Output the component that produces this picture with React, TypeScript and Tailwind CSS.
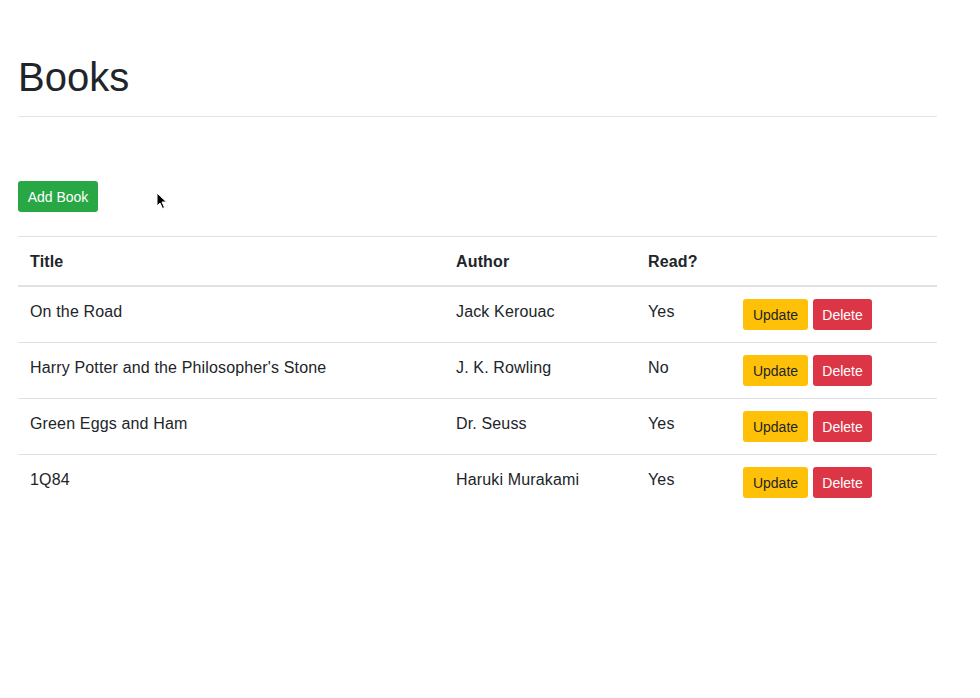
import React from 'react'

const books = [
  { title: 'On the Road', author: 'Jack Kerouac', read: true },
  { title: "Harry Potter and the Philosopher's Stone", author: 'J. K. Rowling', read: false },
  { title: 'Green Eggs and Ham', author: 'Dr. Seuss', read: true },
  { title: '1Q84', author: 'Haruki Murakami', read: true },
]

export default function App() {
  return (
    <div
      className="relative min-h-[698px] bg-white text-[#212529]"
      style={{ fontFamily: '"Liberation Sans", Arial, sans-serif' }}
    >
      <div className="w-[919px] ml-[18px] pt-[53px]">
        <h1 className="text-[40px] leading-[48px] font-normal">Books</h1>
        <hr className="mt-[15px] border-0 border-t border-[#e5e5e5]" />

        <button className="mt-[64px] h-[31px] w-[80px] rounded-[3px] bg-[#28a745] text-white text-[14px] leading-[21px] pt-[1px]">
          Add Book
        </button>

        {/* Table */}
        <table className="mt-[24px] w-full border-collapse text-[16px] tracking-[0.15px]">
          <thead>
            <tr className="border-t border-[#dee2e6]">
              <th className="w-[426px] px-[12px] pt-[13px] pb-[11px] text-left font-bold leading-[24px] border-b-2 border-[#dee2e6]">Title</th>
              <th className="w-[192px] px-[12px] pt-[13px] pb-[11px] text-left font-bold leading-[24px] border-b-2 border-[#dee2e6]">Author</th>
              <th className="w-[95px] px-[12px] pt-[13px] pb-[11px] text-left font-bold leading-[24px] border-b-2 border-[#dee2e6]">Read?</th>
              <th className="px-[12px] pt-[13px] pb-[11px] border-b-2 border-[#dee2e6]"></th>
            </tr>
          </thead>
          <tbody>
            {books.map((b, i) => (
              <tr key={i} className={i < books.length - 1 ? 'border-b border-[#dee2e6]' : ''}>
                <td className="px-[12px] pt-[13px] pb-[11px] align-top leading-[24px]">{b.title}</td>
                <td className="px-[12px] pt-[13px] pb-[11px] align-top leading-[24px]">{b.author}</td>
                <td className="px-[12px] pt-[13px] pb-[11px] align-top leading-[24px]">{b.read ? 'Yes' : 'No'}</td>
                <td className="px-[12px] pt-[12px] pb-[12px] align-top">
                  <div className="flex gap-[5px] tracking-normal">
                    <button className="h-[31px] w-[65px] pt-[1px] rounded-[3px] bg-[#ffc107] text-[#212529] text-[14px] leading-[21px]">
                      Update
                    </button>
                    <button className="h-[31px] w-[59px] pt-[1px] rounded-[3px] bg-[#dc3545] text-white text-[14px] leading-[21px]">
                      Delete
                    </button>
                  </div>
                </td>
              </tr>
            ))}
          </tbody>
        </table>
      </div>

      {/* mouse pointer from the capture */}
      <svg className="absolute left-[156px] top-[192px]" width="12" height="18" viewBox="0 0 12 18">
        <path d="M1 1 L1 14 L4 11 L6.5 16.5 L8.5 15.5 L6 10 L10.5 10 Z" fill="#000" stroke="#fff" strokeWidth="1" />
      </svg>
    </div>
  )
}
